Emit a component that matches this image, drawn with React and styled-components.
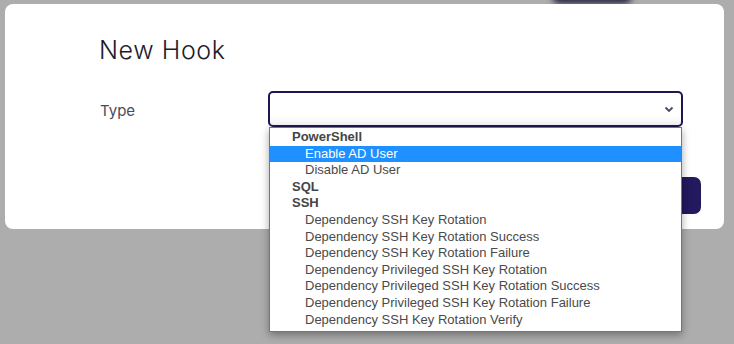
import React from 'react';
import styled, { createGlobalStyle } from 'styled-components';

const GlobalStyle = createGlobalStyle`
	html, body {
		margin: 0;
		background: #adadad;
		font-family: Inter, "Open Sans", sans-serif;
	}
`;

const Page = styled.div`
	position: relative;
	width: 734px;
	height: 344px;
	padding: 4px 10px 0 5px;
	box-sizing: border-box;
	overflow: hidden;
`;

// blurred button from the page behind the overlay
const Behind = styled.div`
	position: absolute;
	top: -16px;
	left: 552px;
	width: 80px;
	height: 20px;
	border-radius: 8px;
	background: #2b2b44;
	filter: blur(3px);
`;

const Modal = styled.section`
	position: relative;
	background: #fff;
	border-radius: 8px;
	height: 225px;
	padding: 26px 23px 0 94px;
	box-sizing: border-box;
	display: flex;
	flex-direction: column;
`;

const Title = styled.h1`
	margin: 0;
	font-family: Inter, sans-serif;
	font-weight: 300;
	font-size: 25px;
	line-height: 40px;
	letter-spacing: 0.6px;
	color: #1c1c2a;
`;

const Row = styled.div`
	display: grid;
	grid-template-columns: 169px 415px;
	align-items: center;
	margin-top: 21px;
`;

const Label = styled.label`
	font-family: Inter, sans-serif;
	font-size: 15px;
	color: #4b4b5a;
	padding: 2px 0 0 1px;
`;

const SelectWrap = styled.div`
	position: relative;
`;

const SelectBox = styled.div`
	height: 36px;
	box-sizing: border-box;
	border: 2px solid #1f1752;
	border-radius: 5px;
	background: linear-gradient(#ffffff 70%, #f4f4f6);
	display: flex;
	align-items: center;
	justify-content: flex-end;
	padding-right: 7px;
`;

const Chevron = () => (
	<svg width="10" height="7" viewBox="0 0 10 7">
		<path d="M1.5 1.5 L5 5 L8.5 1.5" fill="none" stroke="#4a4a5a" strokeWidth="1.8" />
	</svg>
);

const List = styled.ul`
	position: absolute;
	top: 36px;
	left: 1px;
	width: 413px;
	margin: 0;
	padding: 1px 0 3px;
	list-style: none;
	background: #fff;
	border: 1px solid #767676;
	box-sizing: border-box;
	box-shadow: 0 3px 8px rgba(0, 0, 0, 0.35);
	z-index: 2;
	font-family: "Liberation Sans", Arial, sans-serif;
	font-size: 13px;
`;

const Group = styled.li`
	line-height: 16.6px;
	padding-left: 22px;
	font-weight: 700;
	color: #454545;
`;

const Option = styled.li`
	line-height: 16.6px;
	padding-left: 35px;
	color: ${p => (p.$active ? '#fff' : '#4a4a4a')};
	background: ${p => (p.$active ? '#1e90ff' : 'transparent')};
`;

const Footer = styled.div`
	display: flex;
	justify-content: flex-end;
	margin-top: 50px;
`;

const Button = styled.button`
	width: 100px;
	height: 37px;
	border: none;
	border-radius: 7px;
	background: #22195f;
	color: #fff;
	font-family: Inter, sans-serif;
	font-size: 14px;
`;

const groups = [
	{ name: 'PowerShell', options: ['Enable AD User', 'Disable AD User'] },
	{ name: 'SQL', options: [] },
	{
		name: 'SSH',
		options: [
			'Dependency SSH Key Rotation',
			'Dependency SSH Key Rotation Success',
			'Dependency SSH Key Rotation Failure',
			'Dependency Privileged SSH Key Rotation',
			'Dependency Privileged SSH Key Rotation Success',
			'Dependency Privileged SSH Key Rotation Failure',
			'Dependency SSH Key Rotation Verify',
		],
	},
];

export default function App() {
	return (
		<>
			<GlobalStyle />
			<Page>
				<Behind />
				<Modal>
					<Title>New Hook</Title>
					<Row>
						<Label>Type</Label>
						<SelectWrap>
							<SelectBox>
								<Chevron />
							</SelectBox>
							<List>
								{groups.map(g => (
									<React.Fragment key={g.name}>
										<Group>{g.name}</Group>
										{g.options.map(o => (
											<Option key={o} $active={o === 'Enable AD User'}>
												{o}
											</Option>
										))}
									</React.Fragment>
								))}
							</List>
						</SelectWrap>
					</Row>
					<Footer>
						<Button>Create</Button>
					</Footer>
				</Modal>
			</Page>
		</>
	);
}
